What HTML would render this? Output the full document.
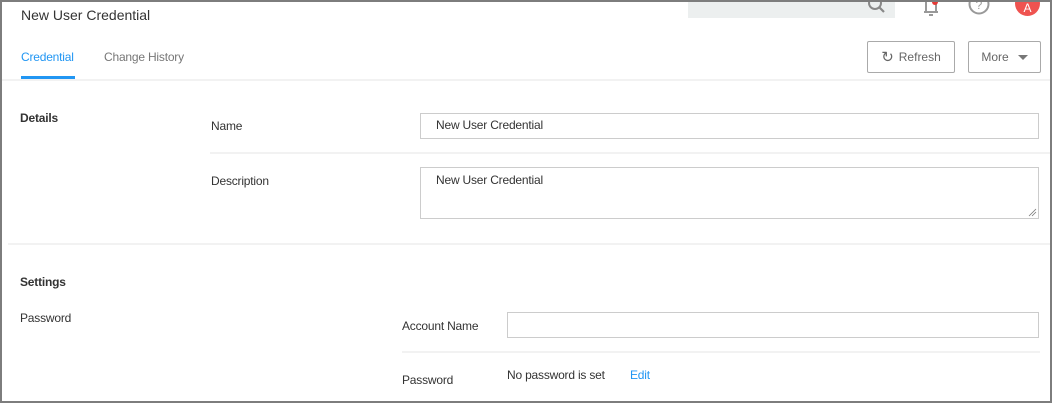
<!DOCTYPE html>
<html><head><meta charset="utf-8"><style>
*{box-sizing:border-box;margin:0;padding:0}
body{width:1052px;height:403px;overflow:hidden;background:#fff;font-family:"Liberation Sans",sans-serif;position:relative;color:#333}
.frame{position:absolute;left:0;top:0;width:1052px;height:403px;border:2px solid #7d7d7d;border-right-width:2px;pointer-events:none;z-index:9}
.a{position:absolute;white-space:nowrap}
.t12{font-size:12px;letter-spacing:-0.2px}
.hr{position:absolute;height:2px;background:#f2f2f2}
.inp{position:absolute;border:1px solid #ccc;background:#fff}
.btn{position:absolute;border:1px solid #aaa;border-radius:2px;font-size:12px;color:#666;display:flex;align-items:center;justify-content:center}
</style></head><body>
<div class="frame"></div>
<div class="a" style="left:21px;top:7px;font-size:14px;color:#333">New User Credential</div>
<div class="a" style="left:688px;top:0;width:207px;height:18px;background:#ecefef"></div>
<svg class="a" style="left:866px;top:0" width="22" height="16"><circle cx="9" cy="3" r="6" fill="none" stroke="#888" stroke-width="2"/><path d="M13 7l5 5" stroke="#888" stroke-width="2.2"/></svg>
<svg class="a" style="left:920px;top:0" width="22" height="18"><path d="M4 12h14M6 12V2M16 12V2M9 15h4" stroke="#999" stroke-width="2" fill="none"/><circle cx="15" cy="2" r="3" fill="#e53935"/></svg>
<svg class="a" style="left:966px;top:0" width="26" height="18"><circle cx="13" cy="4" r="9.5" fill="none" stroke="#999" stroke-width="2"/><text x="13" y="9" font-size="12" text-anchor="middle" fill="#999" font-family="Liberation Sans">?</text></svg>
<div class="a" style="left:1015px;top:-9px;width:25px;height:25px;border-radius:50%;background:#ef5350;color:#fff;font-size:12px;text-align:center;line-height:34px">A</div>
<div class="a t12" style="left:21px;top:50px;color:#2196f3">Credential</div>
<div class="a" style="left:21px;top:76px;width:54px;height:3px;background:#2196f3"></div>
<div class="a t12" style="left:104px;top:50px;color:#777">Change History</div>
<div class="hr" style="left:2px;top:79px;width:1048px"></div>
<div class="btn" style="left:867px;top:41px;width:88px;height:32px"><span style="font-size:15px;margin-right:5px;color:#666">&#x21bb;</span>Refresh</div>
<div class="btn" style="left:968px;top:41px;width:73px;height:32px">More<span style="margin-left:9px;border-left:5px solid transparent;border-right:5px solid transparent;border-top:5px solid #777"></span></div>
<div class="a t12" style="left:20px;top:111px;font-weight:bold">Details</div>
<div class="a t12" style="left:211px;top:119px">Name</div>
<div class="inp" style="left:420px;top:113px;width:619px;height:26px"></div>
<div class="a t12" style="left:436px;top:118px">New User Credential</div>
<div class="hr" style="left:210px;top:152px;width:840px"></div>
<div class="a t12" style="left:211px;top:174px">Description</div>
<div class="inp" style="left:420px;top:167px;width:619px;height:52px"></div>
<div class="a t12" style="left:436px;top:173px">New User Credential</div>
<svg class="a" style="left:1028px;top:208px" width="9" height="9"><path d="M1 8L8 1M4 8L8 4" stroke="#777" stroke-width="0.8"/></svg>
<div class="hr" style="left:8px;top:243px;width:1042px"></div>
<div class="a t12" style="left:20px;top:275px;font-weight:bold">Settings</div>
<div class="a t12" style="left:20px;top:311px">Password</div>
<div class="a t12" style="left:402px;top:319px">Account Name</div>
<div class="inp" style="left:507px;top:312px;width:532px;height:26px"></div>
<div class="hr" style="left:402px;top:351px;width:638px"></div>
<div class="a t12" style="left:402px;top:373px">Password</div>
<div class="a t12" style="left:507px;top:368px">No password is set</div>
<div class="a t12" style="left:630px;top:368px;color:#2196f3">Edit</div>
</body></html>
